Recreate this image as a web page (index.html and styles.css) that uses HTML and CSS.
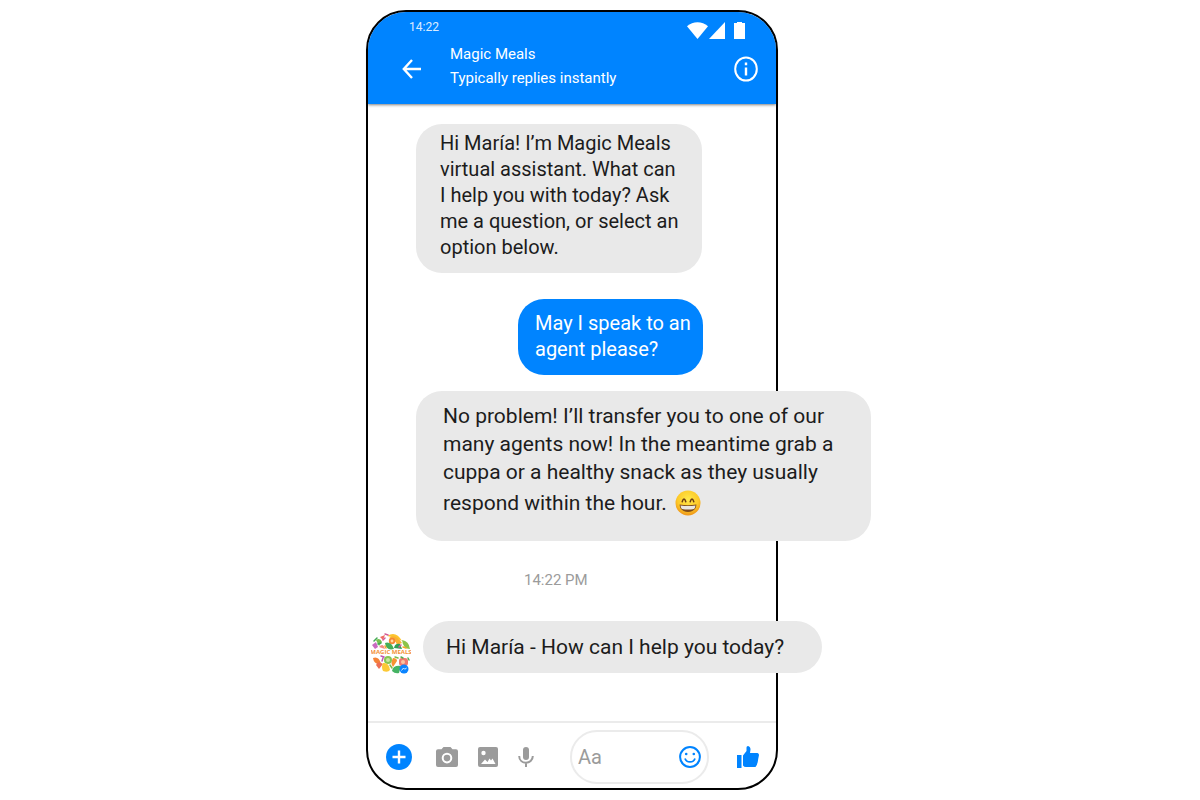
FILE: index.html
```
<!DOCTYPE html>
<html lang="en">
<head>
    <meta charset="UTF-8">
    <meta name="viewport" content="width=device-width, initial-scale=1.0">
    <title>Magic Meals - Chat</title>
    <link rel="stylesheet" href="styles.css">
</head>
<body>
    <main class="phone">
        <header class="header">
            <div class="status-bar">
                <span class="status-time">14:22</span>
                <svg class="status-icons" width="60" height="20" viewBox="0 0 60 20" fill="currentColor" aria-hidden="true">
                    <path d="M0 5.2C6-.2 15-.2 21 5.2L10.500 18z"/>
                    <path d="M22 18 38 1v17z"/>
                    <path d="M47 2h3V1h5v1h3v16H47z"/>
                </svg>
            </div>
            <div class="title-bar">
                <button class="icon-btn" aria-label="Back">
                    <svg width="20" height="20" viewBox="0 0 20 20" fill="none" stroke="currentColor" stroke-width="2.400">
                        <path d="M19 10H2M10 1 1.800 10l8.200 9"/>
                    </svg>
                </button>
                <div class="contact">
                    <h1 class="contact-name">Magic Meals</h1>
                    <p class="contact-status">Typically replies instantly</p>
                </div>
                <button class="icon-btn" aria-label="Conversation info">
                    <svg width="24" height="26" viewBox="0 0 24 26" fill="none" stroke="currentColor" stroke-width="2">
                        <ellipse cx="12" cy="13" rx="10.800" ry="11.600"/>
                        <path d="M12 11.500v8M12 6.500v2.700" stroke-width="2.400"/>
                    </svg>
                </button>
            </div>
        </header>

        <section class="messages">
            <p class="bubble bubble-intro">Hi María! I’m Magic Meals<br>virtual assistant. What can<br>I help you with today? Ask<br>me a question, or select an<br>option below.</p>

            <p class="bubble bubble-user">May I speak to an<br>agent please?</p>

            <p class="bubble bubble-large bubble-transfer">No problem! I’ll transfer you to one of our<br>many agents now! In the meantime grab a<br>cuppa or a healthy snack as they usually<br><span class="emoji-line">respond within the hour. <svg class="emoji" width="26" height="26" viewBox="0 0 26 26" role="img" aria-label="Grinning face">
                <defs>
                    <radialGradient id="face" cx="50%" cy="35%" r="65%">
                        <stop offset="0" stop-color="#ffe94a"/>
                        <stop offset=".65" stop-color="#fdc928"/>
                        <stop offset="1" stop-color="#ee9317"/>
                    </radialGradient>
                </defs>
                <circle cx="13" cy="13" r="12.500" fill="url(#face)"/>
                <path d="M7.200 11.800Q9 6 10.800 11.800M15.200 11.800Q17 6 18.800 11.800" fill="none" stroke="#6b3b12" stroke-width="1.500" stroke-linecap="round"/>
                <path d="M4.600 14.500q8.400 1.300 16.800 0c0 10-16.800 10-16.800 0z" fill="#7d4b1b"/>
                <path d="M5.500 15.500q7.500 1 15 0-.3 2.300-1.500 3.500-6 1-12 0-1.200-1.200-1.500-3.500z" fill="#e9e6df"/>
            </svg></span></p>

            <time class="timestamp">14:22 PM</time>

            <div class="agent-row">
                <svg class="avatar" width="40" height="42" viewBox="0 0 40 42" role="img" aria-label="Magic Meals">
                    <g stroke-linecap="round">
                        <path d="M16 4q9-6 15 5-7-4-15-5z" fill="#fdc52e"/>
                        <path d="M18 6q6-5 13 5l-5 2q-1-5-8-7z" fill="#f9b233"/>
                        <circle cx="21" cy="9" r="3.200" fill="#f58634"/>
                        <circle cx="21" cy="9" r="1.400" fill="#ffd9a0"/>
                        <path d="M14 11q6-2 9 6-8 2-9-6z" fill="#45ae58"/>
                        <path d="M31 8q7 1 8 9-7 0-8-9z" fill="#8bc34a"/>
                        <path d="M23 16q1-5 6-4l2 5z" fill="#2e9e57"/>
                        <path d="M1 13l4-3 2 5-3 2z" fill="#c86ac0"/>
                        <path d="M5 8q4-3 6 2l-3 4z" fill="#76c04e"/>
                        <path d="M9 5l5-2-2 5z" fill="#ef6b62"/>
                        <path d="M8 15q4-5 6 2z" fill="#f28b82"/>
                        <path d="M12 8l2-2M17 3l-3-1M28 15l2-2" stroke="#d35b97" stroke-width="1.500"/>
                        <path d="M14 14l1 2M35 16l-3-1" stroke="#f5a623" stroke-width="1.500"/>
                        <path d="M3 9l3-3M7 12l3-1" stroke="#43a956" stroke-width="1.500"/>

                        <path d="M2 26q6-2 8 6-7 1-8-6z" fill="#f58238"/>
                        <path d="M5 33q2-5 7-1l-4 5z" fill="#ed6f55"/>
                        <circle cx="17" cy="28" r="4" fill="#84c653"/>
                        <circle cx="17" cy="28" r="2" fill="#c8e6a0"/>
                        <path d="M12 31q6-1 7 7-2 3-7 1-2-4 0-8z" fill="#fcc936"/>
                        <path d="M12 26l-1 3M13 25l-3-1" stroke="#c05ab4" stroke-width="1.500"/>
                        <path d="M22 26q4 0 4 3l-4 6q-3-4 0-9z" fill="#f79332"/>
                        <path d="M21 39q1-6 9-5l-2 7q-4 1-7-2z" fill="#45b363"/>
                        <rect x="28" y="26" width="9" height="8" rx="3" fill="#ef796f"/>
                        <circle cx="32" cy="30" r="2" fill="#fac4a0"/>
                        <path d="M30 25l2 1M37 26l1 2" stroke="#54ad50" stroke-width="1.500"/>
                        <path d="M27 26l-3-1M21 36l-2-3" stroke="#7fba45" stroke-width="1.500"/>
                    </g>
                    <text x="20" y="22" text-anchor="middle" class="avatar-name">MAGIC MEALS</text>
                    <circle cx="33" cy="37" r="4.500" fill="#0a84ff"/>
                    <path d="M30.500 38.500l2-2.500 1.200 1.200 2-1.200" fill="none" stroke="#fff" stroke-width=".8"/>
                </svg>
                <p class="bubble bubble-large bubble-agent">Hi María - How can I help you today?</p>
            </div>
        </section>

        <form class="composer">
            <button class="icon-btn btn-add" type="button" aria-label="More">
                <svg width="26" height="26" viewBox="0 0 26 26">
                    <circle cx="13" cy="13" r="13" fill="currentColor"/>
                    <path d="M13 6.500v13M6.500 13h13" stroke="#fff" stroke-width="2.400"/>
                </svg>
            </button>
            <button class="icon-btn btn-muted" type="button" aria-label="Camera">
                <svg width="22" height="20" viewBox="0 0 22 20" fill="currentColor">
                    <path fill-rule="evenodd" d="M7.500 0h7l2 2.300H20a2 2 0 0 1 2 2V18a2 2 0 0 1-2 2H2a2 2 0 0 1-2-2V4.300a2 2 0 0 1 2-2h3.500zM11 5.800a5.300 5.300 0 1 0 0 10.600 5.300 5.300 0 0 0 0-10.600zm0 2a3.300 3.300 0 1 1 0 6.600 3.300 3.300 0 0 1 0-6.600z"/>
                </svg>
            </button>
            <button class="icon-btn btn-muted" type="button" aria-label="Gallery">
                <svg width="20" height="20" viewBox="0 0 20 20">
                    <rect width="20" height="20" rx="2" fill="currentColor"/>
                    <circle cx="5.500" cy="6" r="2.200" fill="#fff"/>
                    <path d="M3 17l4-4.500 2.500 2.500 2-3.500 1.500 2 1.500-2 3 5.500z" fill="#fff"/>
                </svg>
            </button>
            <button class="icon-btn btn-muted btn-mic" type="button" aria-label="Voice message">
                <svg width="16" height="20" viewBox="0 0 16 20">
                    <rect x="5" y="0" width="6" height="13" rx="3" fill="currentColor"/>
                    <path d="M1.200 9c0 9 13.600 9 13.600 0M8 15.500V20" fill="none" stroke="currentColor" stroke-width="2"/>
                </svg>
            </button>
            <div class="field">
                <input class="field-input" type="text" placeholder="Aa" aria-label="Message">
                <button class="icon-btn" type="button" aria-label="Emoji">
                    <svg width="22" height="22" viewBox="0 0 22 22" fill="none" stroke="currentColor" stroke-width="2">
                        <circle cx="11" cy="11" r="9.900"/>
                        <circle cx="7.200" cy="8" r="1.300" fill="currentColor" stroke="none"/>
                        <circle cx="14.800" cy="8" r="1.300" fill="currentColor" stroke="none"/>
                        <path d="M6 12.500c1.600 4.600 8.400 4.600 10 0" stroke-width="1.800"/>
                    </svg>
                </button>
            </div>
            <button class="icon-btn btn-like" type="button" aria-label="Like">
                <svg width="22" height="22" viewBox="0 0 22 22" fill="currentColor">
                    <path d="M0 9h4.500v13H0z"/>
                    <path d="M6 9.500 9.500 5V1.500Q9.500 0 11 0q2.500.5 2.500 3.500L13 7h7.500q1.500.5 1.500 2l-.8 4q-.7 6-2.700 8H9q-2 0-3-1.500z"/>
                </svg>
            </button>
        </form>
    </main>
</body>
</html>
```
FILE: styles.css
```
:root {
    --color-primary: #0084ff;
    --color-bubble: #e9e9e9;
    --color-text: #1c1c1c;
    --color-muted: #9b9b9b;
    --color-line: #ebebeb;
}

* {
    box-sizing: border-box;
    margin: 0;
    padding: 0;
}

body {
    min-height: 100vh;
    display: flex;
    justify-content: center;
    padding: 10px 56px 10px 0;
    background-color: #fff;
    color: var(--color-text);
    font-family: Roboto, "Liberation Sans", sans-serif;
}

/* Wide bubbles run past the right edge, so the frame does not clip */
.phone {
    flex: 0 1 412px;
    min-width: 0;
    display: flex;
    flex-direction: column;
    border: 2px solid #000;
    border-radius: 40px;
}

.icon-btn {
    display: flex;
    flex-shrink: 0;
    border: none;
    background: none;
    color: inherit;
    cursor: pointer;
}

/* Header */
.header {
    padding: 5px 18px 14px 34px;
    border-radius: 38px 38px 0 0;
    background-color: var(--color-primary);
    color: #fff;
    box-shadow: 0 1px 3px rgba(0, 0, 0, 0.5);
}

.status-bar {
    display: flex;
    justify-content: space-between;
    padding: 0 11px 0 7px;
}

.status-time {
    font-size: 12px;
    line-height: 20px;
    opacity: 0.85;
}

.status-icons {
    margin-top: 4px;
}

.title-bar {
    display: flex;
    align-items: center;
    margin-top: 1px;
}

.title-bar .icon-btn {
    padding-top: 6px;
}

.contact {
    flex: 1;
    padding-left: 28px;
}

.contact-name,
.contact-status {
    font-size: 15px;
    font-weight: 400;
    line-height: 24px;
}

/* Messages */
.messages {
    flex: 1;
    display: flex;
    flex-direction: column;
    align-items: flex-start;
    padding: 20px 0 0 48px;
}

.bubble {
    border-radius: 26px;
    background-color: var(--color-bubble);
    font-size: 20px;
    line-height: 26px;
    white-space: nowrap;
}

.bubble-large {
    font-size: 21px;
    line-height: 28px;
}

.bubble-intro {
    padding: 6px 24px 13px;
}

.bubble-user {
    margin: 26px 0 16px 102px;
    padding: 11px 12px 13px 17px;
    background-color: var(--color-primary);
    color: #fff;
}

.bubble-transfer {
    padding: 11px 38px 21px 27px;
}

.emoji-line {
    display: flex;
    align-items: center;
    gap: 8px;
    line-height: 34px;
}

.timestamp {
    margin: 28px 0 29px 108px;
    color: var(--color-muted);
    font-size: 15px;
    line-height: 22px;
}

.agent-row {
    display: flex;
    align-items: center;
    gap: 12px;
    margin-left: -45px;
}

.avatar {
    flex-shrink: 0;
    margin-top: 12px;
}

.avatar-name {
    fill: #f39237;
    font: 700 6px "Open Sans", sans-serif;
}

.bubble-agent {
    padding: 12px 38px 12px 23px;
}

/* Composer */
.composer {
    display: flex;
    align-items: center;
    gap: 20px;
    padding: 7px 17px 4px 18px;
    border-top: 2px solid var(--color-line);
    color: var(--color-primary);
}

.btn-add {
    margin-right: 4px;
}

.btn-muted {
    color: var(--color-muted);
}

.btn-mic {
    margin-right: 16px;
}

.btn-like {
    margin-left: 8px;
}

.field {
    flex: 1;
    display: flex;
    align-items: center;
    min-width: 0;
    padding: 0 6px;
    border: 2px solid var(--color-line);
    border-radius: 27px;
}

.field-input {
    flex: 1;
    min-width: 0;
    height: 50px;
    border: none;
    outline: none;
    background: none;
    color: var(--color-text);
    font: 20px Roboto, "Liberation Sans", sans-serif;
}

.field-input::placeholder {
    color: var(--color-muted);
}
```
